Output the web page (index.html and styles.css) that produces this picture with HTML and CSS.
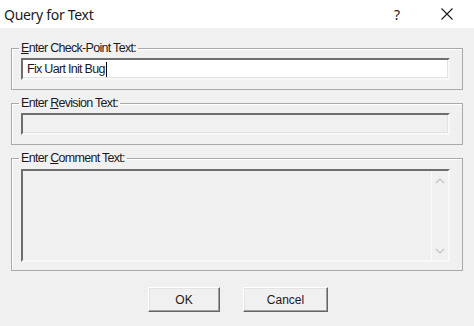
FILE: index.html
```html
<!DOCTYPE html>
<html lang="en">
<head>
  <meta charset="UTF-8">
  <title>Query for Text</title>
  <link rel="stylesheet" href="styles.css">
</head>
<body>
  <div class="dialog">
    <div class="titlebar">
      <span class="title">Query for Text</span>
      <span class="help">?</span>
      <span class="close">
        <svg width="12" height="12" viewBox="0 0 12 12">
          <path d="M0.5 0.5 L11.5 11.5 M11.5 0.5 L0.5 11.5" stroke="#1a1a1a" stroke-width="1.1" fill="none"/>
        </svg>
      </span>
    </div>

    <div class="content">
      <fieldset class="group">
        <legend><u>E</u>nter Check-Point Text:</legend>
        <div class="field">Fix Uart Init Bug<span class="caret"></span></div>
      </fieldset>

      <fieldset class="group">
        <legend>Enter <u>R</u>evision Text:</legend>
        <div class="field disabled"></div>
      </fieldset>

      <fieldset class="group comment">
        <legend>Enter <u>C</u>omment Text:</legend>
        <div class="memo">
          <div class="memo-body"></div>
          <div class="scrollbar">
            <svg width="10" height="6" viewBox="0 0 10 6">
              <path d="M1 5 L5 1 L9 5" stroke="#c4c4c4" stroke-width="1.3" fill="none"/>
            </svg>
            <svg width="10" height="6" viewBox="0 0 10 6">
              <path d="M1 1 L5 5 L9 1" stroke="#c4c4c4" stroke-width="1.3" fill="none"/>
            </svg>
          </div>
        </div>
      </fieldset>

      <div class="buttons">
        <button class="btn ok">OK</button>
        <button class="btn cancel">Cancel</button>
      </div>
    </div>
  </div>
</body>
</html>
```

FILE: styles.css
```css
html, body {
  margin: 0;
  padding: 0;
}

body {
  width: 474px;
  height: 326px;
  background: #f0f0f0;
  overflow: hidden;
}

.dialog {
  width: 474px;
  height: 326px;
  display: flex;
  flex-direction: column;
}

.titlebar {
  height: 28px;
  background: #ffffff;
  display: flex;
  align-items: center;
  padding-left: 4px;
  font-family: "Noto Sans", "Open Sans", sans-serif;
  font-size: 14px;
  letter-spacing: -0.3px;
  color: #1a1a1a;
}

.title {
  flex: 1;
}

.help {
  width: 14px;
  text-align: center;
  margin-right: 37px;
}

.close {
  display: flex;
  margin-right: 21px;
}

.content {
  flex: 1;
  padding: 13px 11px 0 11px;
  font-family: "Liberation Sans", Arial, sans-serif;
  font-size: 12.5px;
  letter-spacing: -0.7px;
  color: #1c1a1e;
}

.group {
  margin: 0 0 6px 0;
  padding: 3px 12px 9px 9px;
  border: 1px solid #a9a9a9;
  box-shadow: inset 1px 1px 0 #ffffff;
}

.group.comment {
  padding-top: 4px;
  padding-bottom: 8px;
}

.group legend {
  padding: 0 2px;
  margin-left: -2px;
  line-height: 14px;
}

.group u {
  text-decoration-thickness: 1px;
}

.field {
  height: 18px;
  background: #ffffff;
  border-style: solid;
  border-width: 2px;
  border-color: #6e6e6e #f8f8f8 #f8f8f8 #6e6e6e;
  box-shadow: inset -1px -1px 0 #e3e3e3;
  padding-left: 4px;
  line-height: 19px;
  display: flex;
  align-items: center;
}

.field.disabled {
  background: #f0f0f0;
}

.caret {
  width: 1px;
  height: 15px;
  margin-left: 1px;
  background: #000000;
}

.memo {
  height: 89px;
  display: flex;
  border-style: solid;
  border-width: 2px;
  border-color: #6e6e6e #f8f8f8 #f8f8f8 #6e6e6e;
  background: #f0f0f0;
}

.memo-body {
  flex: 1;
}

.scrollbar {
  width: 16px;
  border-left: 1px solid #fafafa;
  display: flex;
  flex-direction: column;
  justify-content: space-between;
  align-items: center;
  padding: 7px 0 6px 0;
}

.buttons {
  display: flex;
  padding-top: 10px;
  padding-left: 137px;
  gap: 23px;
}

.btn {
  height: 25px;
  font-family: "Liberation Sans", Arial, sans-serif;
  font-size: 12px;
  color: #1a1a1a;
  background: #f0f0f0;
  border-style: solid;
  border-width: 1px;
  border-color: #ffffff #646464 #646464 #ffffff;
  box-shadow: inset -1px -1px 0 #a0a0a0, inset 1px 1px 0 #e3e3e3;
  padding: 0;
}

.ok {
  width: 72px;
}

.cancel {
  width: 85px;
}
```
